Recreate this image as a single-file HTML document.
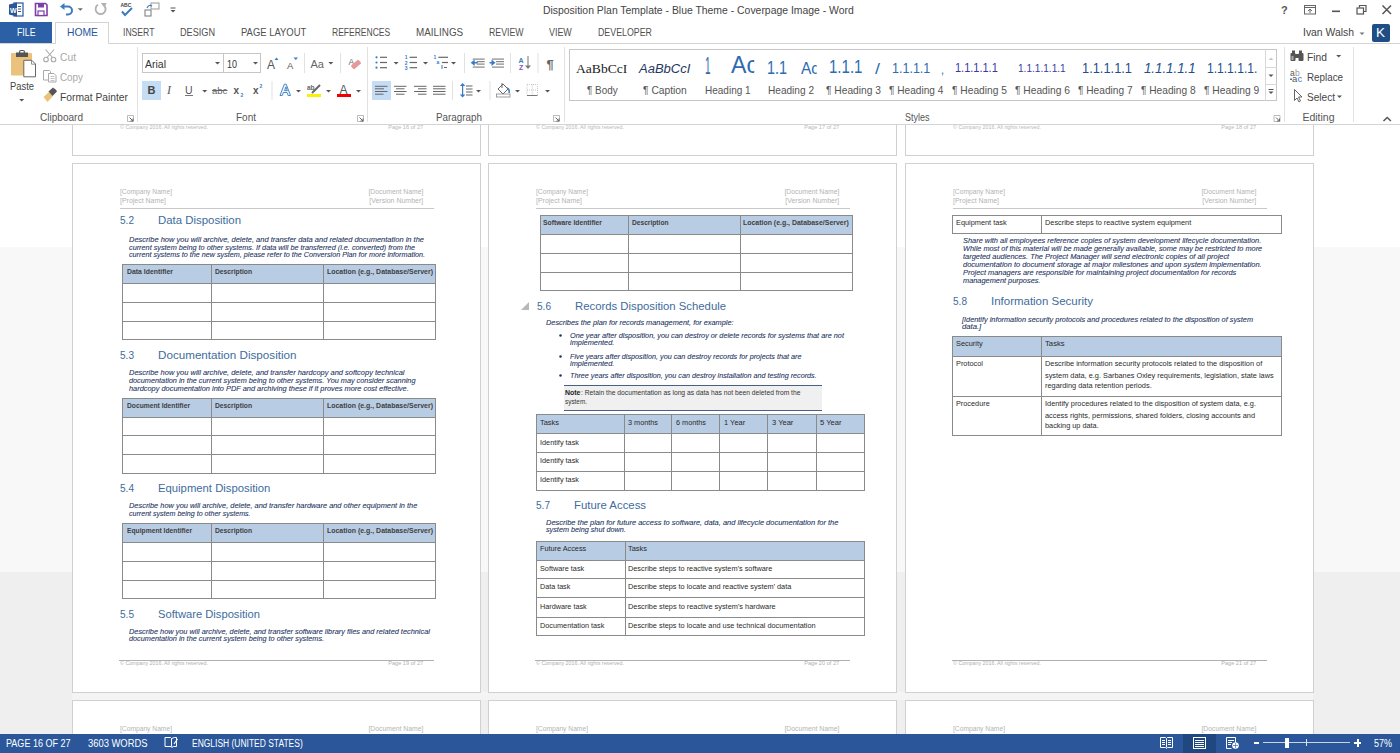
<!DOCTYPE html>
<html><head><meta charset="utf-8"><style>
html,body{margin:0;padding:0;width:1400px;height:753px;overflow:hidden;background:#fff;position:relative;font-family:'Liberation Sans',sans-serif;}
</style></head><body>
<div style="position:absolute;left:0px;top:125px;width:1400px;height:122px;background:#ffffff"></div>
<div style="position:absolute;left:0px;top:247px;width:1400px;height:325px;background:#f8f8f8"></div>
<div style="position:absolute;left:0px;top:572px;width:1400px;height:162px;background:#efefef"></div>
<div style="position:absolute;left:72px;top:692px;width:1241px;height:8px;background:#f4f4f4"></div>
<div style="position:absolute;left:72px;top:110px;width:409px;height:46px;background:#fff;border:1px solid #d0d0d0;border-top:none;box-sizing:border-box"></div>
<div style="position:absolute;left:72px;top:163px;width:409px;height:530px;background:#fff;border:1px solid #d0d0d0;box-sizing:border-box"></div>
<div style="position:absolute;left:72px;top:700px;width:409px;height:60px;background:#fff;border:1px solid #d0d0d0;box-sizing:border-box"></div>
<div style="position:absolute;left:488px;top:110px;width:409px;height:46px;background:#fff;border:1px solid #d0d0d0;border-top:none;box-sizing:border-box"></div>
<div style="position:absolute;left:488px;top:163px;width:409px;height:530px;background:#fff;border:1px solid #d0d0d0;box-sizing:border-box"></div>
<div style="position:absolute;left:488px;top:700px;width:409px;height:60px;background:#fff;border:1px solid #d0d0d0;box-sizing:border-box"></div>
<div style="position:absolute;left:905px;top:110px;width:409px;height:46px;background:#fff;border:1px solid #d0d0d0;border-top:none;box-sizing:border-box"></div>
<div style="position:absolute;left:905px;top:163px;width:409px;height:530px;background:#fff;border:1px solid #d0d0d0;box-sizing:border-box"></div>
<div style="position:absolute;left:905px;top:700px;width:409px;height:60px;background:#fff;border:1px solid #d0d0d0;box-sizing:border-box"></div>
<div style="position:absolute;left:120px;top:208px;width:314px;height:1px;background:#c8c8c8"></div>
<div style="position:absolute;left:119px;top:660px;width:315px;height:1px;background:#b0b0b0"></div>
<div style="position:absolute;left:536px;top:208px;width:314px;height:1px;background:#c8c8c8"></div>
<div style="position:absolute;left:535px;top:660px;width:315px;height:1px;background:#b0b0b0"></div>
<div style="position:absolute;left:953px;top:208px;width:314px;height:1px;background:#c8c8c8"></div>
<div style="position:absolute;left:952px;top:660px;width:315px;height:1px;background:#b0b0b0"></div>
<div style="position:absolute;left:122px;top:264px;width:313px;height:19px;background:#b8cce4"></div>
<div style="position:absolute;left:122px;top:264px;width:314px;height:1px;background:#8a8a8a"></div>
<div style="position:absolute;left:122px;top:283px;width:314px;height:1px;background:#8a8a8a"></div>
<div style="position:absolute;left:122px;top:302px;width:314px;height:1px;background:#8a8a8a"></div>
<div style="position:absolute;left:122px;top:321px;width:314px;height:1px;background:#8a8a8a"></div>
<div style="position:absolute;left:122px;top:339px;width:314px;height:1px;background:#8a8a8a"></div>
<div style="position:absolute;left:122px;top:264px;width:1px;height:76px;background:#8a8a8a"></div>
<div style="position:absolute;left:211px;top:264px;width:1px;height:76px;background:#8a8a8a"></div>
<div style="position:absolute;left:323px;top:264px;width:1px;height:76px;background:#8a8a8a"></div>
<div style="position:absolute;left:435px;top:264px;width:1px;height:76px;background:#8a8a8a"></div>
<div style="position:absolute;left:122px;top:398px;width:313px;height:19px;background:#b8cce4"></div>
<div style="position:absolute;left:122px;top:398px;width:314px;height:1px;background:#8a8a8a"></div>
<div style="position:absolute;left:122px;top:417px;width:314px;height:1px;background:#8a8a8a"></div>
<div style="position:absolute;left:122px;top:435px;width:314px;height:1px;background:#8a8a8a"></div>
<div style="position:absolute;left:122px;top:454px;width:314px;height:1px;background:#8a8a8a"></div>
<div style="position:absolute;left:122px;top:473px;width:314px;height:1px;background:#8a8a8a"></div>
<div style="position:absolute;left:122px;top:398px;width:1px;height:76px;background:#8a8a8a"></div>
<div style="position:absolute;left:211px;top:398px;width:1px;height:76px;background:#8a8a8a"></div>
<div style="position:absolute;left:323px;top:398px;width:1px;height:76px;background:#8a8a8a"></div>
<div style="position:absolute;left:435px;top:398px;width:1px;height:76px;background:#8a8a8a"></div>
<div style="position:absolute;left:122px;top:523px;width:313px;height:19px;background:#b8cce4"></div>
<div style="position:absolute;left:122px;top:523px;width:314px;height:1px;background:#8a8a8a"></div>
<div style="position:absolute;left:122px;top:542px;width:314px;height:1px;background:#8a8a8a"></div>
<div style="position:absolute;left:122px;top:561px;width:314px;height:1px;background:#8a8a8a"></div>
<div style="position:absolute;left:122px;top:580px;width:314px;height:1px;background:#8a8a8a"></div>
<div style="position:absolute;left:122px;top:598px;width:314px;height:1px;background:#8a8a8a"></div>
<div style="position:absolute;left:122px;top:523px;width:1px;height:76px;background:#8a8a8a"></div>
<div style="position:absolute;left:211px;top:523px;width:1px;height:76px;background:#8a8a8a"></div>
<div style="position:absolute;left:323px;top:523px;width:1px;height:76px;background:#8a8a8a"></div>
<div style="position:absolute;left:435px;top:523px;width:1px;height:76px;background:#8a8a8a"></div>
<div style="position:absolute;left:539.5px;top:214.5px;width:312.5px;height:19.5px;background:#b8cce4"></div>
<div style="position:absolute;left:539.5px;top:214.5px;width:313.5px;height:1px;background:#8a8a8a"></div>
<div style="position:absolute;left:539.5px;top:234px;width:313.5px;height:1px;background:#8a8a8a"></div>
<div style="position:absolute;left:539.5px;top:252.5px;width:313.5px;height:1px;background:#8a8a8a"></div>
<div style="position:absolute;left:539.5px;top:271.5px;width:313.5px;height:1px;background:#8a8a8a"></div>
<div style="position:absolute;left:539.5px;top:290px;width:313.5px;height:1px;background:#8a8a8a"></div>
<div style="position:absolute;left:539.5px;top:214.5px;width:1px;height:76.5px;background:#8a8a8a"></div>
<div style="position:absolute;left:627.5px;top:214.5px;width:1px;height:76.5px;background:#8a8a8a"></div>
<div style="position:absolute;left:739.5px;top:214.5px;width:1px;height:76.5px;background:#8a8a8a"></div>
<div style="position:absolute;left:852px;top:214.5px;width:1px;height:76.5px;background:#8a8a8a"></div>
<svg style="position:absolute;left:521px;top:302px" width="9" height="9"><polygon points="8,0 8,8 0,8" fill="#b8b8b8"/></svg>
<svg style="position:absolute;left:557.6px;top:332.5px" width="5" height="5"><circle cx="2.5" cy="2.5" r="1.25" fill="#1d3461"/></svg>
<svg style="position:absolute;left:557.6px;top:353.5px" width="5" height="5"><circle cx="2.5" cy="2.5" r="1.25" fill="#1d3461"/></svg>
<svg style="position:absolute;left:557.6px;top:372.5px" width="5" height="5"><circle cx="2.5" cy="2.5" r="1.25" fill="#1d3461"/></svg>
<div style="position:absolute;left:564px;top:386px;width:258px;height:24px;background:#f0f0f0"></div>
<div style="position:absolute;left:564px;top:385px;width:258px;height:1px;background:#4a5f85"></div>
<div style="position:absolute;left:564px;top:410px;width:258px;height:1px;background:#4a5f85"></div>
<div style="position:absolute;left:535.6px;top:414.2px;width:328.4px;height:19.19999999999999px;background:#b8cce4"></div>
<div style="position:absolute;left:535.6px;top:414.2px;width:329.4px;height:1px;background:#8a8a8a"></div>
<div style="position:absolute;left:535.6px;top:433.4px;width:329.4px;height:1px;background:#8a8a8a"></div>
<div style="position:absolute;left:535.6px;top:452.4px;width:329.4px;height:1px;background:#8a8a8a"></div>
<div style="position:absolute;left:535.6px;top:471px;width:329.4px;height:1px;background:#8a8a8a"></div>
<div style="position:absolute;left:535.6px;top:490px;width:329.4px;height:1px;background:#8a8a8a"></div>
<div style="position:absolute;left:535.6px;top:414.2px;width:1px;height:76.80000000000001px;background:#8a8a8a"></div>
<div style="position:absolute;left:624.2px;top:414.2px;width:1px;height:76.80000000000001px;background:#8a8a8a"></div>
<div style="position:absolute;left:671.3px;top:414.2px;width:1px;height:76.80000000000001px;background:#8a8a8a"></div>
<div style="position:absolute;left:719.4px;top:414.2px;width:1px;height:76.80000000000001px;background:#8a8a8a"></div>
<div style="position:absolute;left:767.2px;top:414.2px;width:1px;height:76.80000000000001px;background:#8a8a8a"></div>
<div style="position:absolute;left:815.8px;top:414.2px;width:1px;height:76.80000000000001px;background:#8a8a8a"></div>
<div style="position:absolute;left:864px;top:414.2px;width:1px;height:76.80000000000001px;background:#8a8a8a"></div>
<div style="position:absolute;left:535.5px;top:540.5px;width:328.9px;height:19.5px;background:#b8cce4"></div>
<div style="position:absolute;left:535.5px;top:540.5px;width:329.9px;height:1px;background:#8a8a8a"></div>
<div style="position:absolute;left:535.5px;top:560px;width:329.9px;height:1px;background:#8a8a8a"></div>
<div style="position:absolute;left:535.5px;top:578.3px;width:329.9px;height:1px;background:#8a8a8a"></div>
<div style="position:absolute;left:535.5px;top:597.3px;width:329.9px;height:1px;background:#8a8a8a"></div>
<div style="position:absolute;left:535.5px;top:616.7px;width:329.9px;height:1px;background:#8a8a8a"></div>
<div style="position:absolute;left:535.5px;top:635.4px;width:329.9px;height:1px;background:#8a8a8a"></div>
<div style="position:absolute;left:535.5px;top:540.5px;width:1px;height:95.89999999999998px;background:#8a8a8a"></div>
<div style="position:absolute;left:624.6px;top:540.5px;width:1px;height:95.89999999999998px;background:#8a8a8a"></div>
<div style="position:absolute;left:864.4px;top:540.5px;width:1px;height:95.89999999999998px;background:#8a8a8a"></div>
<div style="position:absolute;left:952px;top:214.5px;width:328.5px;height:18.75px;background:#b8cce4"></div>
<div style="position:absolute;left:952px;top:214.5px;width:329.5px;height:1px;background:#8a8a8a"></div>
<div style="position:absolute;left:952px;top:233.25px;width:329.5px;height:1px;background:#8a8a8a"></div>
<div style="position:absolute;left:952px;top:214.5px;width:1px;height:19.75px;background:#8a8a8a"></div>
<div style="position:absolute;left:1040.5px;top:214.5px;width:1px;height:19.75px;background:#8a8a8a"></div>
<div style="position:absolute;left:1280.5px;top:214.5px;width:1px;height:19.75px;background:#8a8a8a"></div>
<div style="position:absolute;left:952px;top:214.5px;width:328.5px;height:19px;background:#fff"></div>
<div style="position:absolute;left:952px;top:214.5px;width:329.5px;height:1px;background:#8a8a8a"></div>
<div style="position:absolute;left:952px;top:233.25px;width:329.5px;height:1px;background:#8a8a8a"></div>
<div style="position:absolute;left:952px;top:214.5px;width:1px;height:19.75px;background:#8a8a8a"></div>
<div style="position:absolute;left:1040.5px;top:214.5px;width:1px;height:19.75px;background:#8a8a8a"></div>
<div style="position:absolute;left:1280.5px;top:214.5px;width:1px;height:19.75px;background:#8a8a8a"></div>
<div style="position:absolute;left:952px;top:336.25px;width:328.5px;height:19.25px;background:#b8cce4"></div>
<div style="position:absolute;left:952px;top:336.25px;width:329.5px;height:1px;background:#8a8a8a"></div>
<div style="position:absolute;left:952px;top:355.5px;width:329.5px;height:1px;background:#8a8a8a"></div>
<div style="position:absolute;left:952px;top:396.25px;width:329.5px;height:1px;background:#8a8a8a"></div>
<div style="position:absolute;left:952px;top:435px;width:329.5px;height:1px;background:#8a8a8a"></div>
<div style="position:absolute;left:952px;top:336.25px;width:1px;height:99.75px;background:#8a8a8a"></div>
<div style="position:absolute;left:1040.5px;top:336.25px;width:1px;height:99.75px;background:#8a8a8a"></div>
<div style="position:absolute;left:1280.5px;top:336.25px;width:1px;height:99.75px;background:#8a8a8a"></div>
<div style="position:absolute;left:0px;top:0px;width:1400px;height:125px;background:#fff"></div>
<div style="position:absolute;left:0px;top:124px;width:1400px;height:1px;background:#d4d4d4"></div>
<div style="position:absolute;left:0px;top:22px;width:52px;height:21px;background:#2b5fa6"></div>
<div style="position:absolute;left:0px;top:43px;width:55px;height:1px;background:#d4d4d4"></div>
<div style="position:absolute;left:109px;top:43px;width:1291px;height:1px;background:#d4d4d4"></div>
<div style="position:absolute;left:55px;top:22px;width:1px;height:22px;background:#d4d4d4"></div>
<div style="position:absolute;left:108px;top:22px;width:1px;height:22px;background:#d4d4d4"></div>
<div style="position:absolute;left:55px;top:22px;width:54px;height:1px;background:#d4d4d4"></div>
<div style="position:absolute;left:1371.5px;top:23.5px;width:18.5px;height:18.5px;background:#1f4e86;border-radius:2px"></div>
<div style="position:absolute;left:137px;top:47px;width:1px;height:75px;background:#e1e1e1"></div>
<div style="position:absolute;left:367px;top:47px;width:1px;height:75px;background:#e1e1e1"></div>
<div style="position:absolute;left:564px;top:47px;width:1px;height:75px;background:#e1e1e1"></div>
<div style="position:absolute;left:1284px;top:47px;width:1px;height:75px;background:#e1e1e1"></div>
<div style="position:absolute;left:1353px;top:47px;width:1px;height:75px;background:#e1e1e1"></div>
<div style="position:absolute;left:142px;top:53px;width:82px;height:20px;border:1px solid #c6c6c6;box-sizing:border-box;background:#fff"></div>
<div style="position:absolute;left:223px;top:53px;width:38px;height:20px;border:1px solid #c6c6c6;box-sizing:border-box;background:#fff"></div>
<div style="position:absolute;left:142px;top:81px;width:19px;height:19px;background:#c5dcf5"></div>
<div style="position:absolute;left:372px;top:81px;width:19px;height:19px;background:#c5dcf5"></div>
<div style="position:absolute;left:569px;top:49px;width:708px;height:52px;border:1px solid #c6c6c6;box-sizing:border-box;background:#fff"></div>
<div style="position:absolute;left:1265px;top:49px;width:1px;height:52px;background:#d8d8d8"></div>
<div style="position:absolute;left:1265px;top:67px;width:12px;height:1px;background:#d8d8d8"></div>
<div style="position:absolute;left:1265px;top:84px;width:12px;height:1px;background:#d8d8d8"></div>
<svg style="position:absolute;left:0;top:0" width="1400" height="125"><rect x="14" y="3" width="9" height="13" fill="#fff" stroke="#2b579a" stroke-width="1.2"/><polygon points="9,4.5 17,2.5 17,16.5 9,14.5" fill="#2b579a"/><text x="10" y="13" font-family="Liberation Sans" font-weight="bold" font-size="7" fill="#fff">W</text><path d="M18 6.5h3M18 9h3M18 11.5h3" stroke="#2b579a" stroke-width="1"/><path d="M35.5 3.5h10l1.5 1.5v10.5h-11.5z" fill="none" stroke="#7e3fa6" stroke-width="1.6"/><rect x="38" y="3.5" width="6" height="4" fill="#7e3fa6"/><rect x="38" y="11" width="6" height="4.5" fill="#fff" stroke="#7e3fa6" stroke-width="1.2"/><path d="M62 6.5h6a4 4 0 0 1 0 8h-2" fill="none" stroke="#3a7cc2" stroke-width="2"/><polygon points="60,6.5 64.5,3 64.5,10" fill="#3a7cc2"/><polygon points="77.8,8.2 82.8,8.2 80.3,10.7" fill="#666"/><path d="M104.5 6 A5 5 0 1 1 98 4.8" fill="none" stroke="#b0b0b0" stroke-width="1.8"/><polygon points="101,3 106.5,3 104.5,8" fill="#b0b0b0"/><text x="120.5" y="7" font-family="Liberation Sans" font-weight="bold" font-size="5" fill="#444">ABC</text><path d="M122 11.5l3 3.5l7-7" fill="none" stroke="#3a7cc2" stroke-width="2"/><rect x="145" y="10" width="6" height="6" fill="#fff" stroke="#777" stroke-width="1"/><rect x="151" y="3" width="8" height="6" fill="#fff" stroke="#999" stroke-width="1"/><path d="M147 8 q2 -4 5 -2" fill="none" stroke="#3a7cc2" stroke-width="1.2"/><path d="M170.5 8h5" stroke="#555" stroke-width="1"/><polygon points="170.5,10 175.5,10 173.0,12.5" fill="#555"/><text x="1281" y="14" font-family="Liberation Sans" font-weight="bold" font-size="11" fill="#555">?</text><rect x="1304.5" y="5.5" width="11" height="8.5" fill="none" stroke="#666" stroke-width="1"/><path d="M1304.5 7.5h11M1310 13v-4M1308 11l2-2l2 2" fill="none" stroke="#666" stroke-width="1"/><rect x="1332" y="10.5" width="8" height="1.6" fill="#555"/><rect x="1357" y="8" width="6.5" height="6" fill="none" stroke="#555" stroke-width="1.2"/><path d="M1359.5 7.5v-2h6.5v6h-2" fill="none" stroke="#555" stroke-width="1.2"/><path d="M1382.5 5.5l8.5 8.5M1391 5.5l-8.5 8.5" stroke="#555" stroke-width="1.5"/><polygon points="1359.5,32.5 1364.5,32.5 1362.0,35.0" fill="#777"/><rect x="11" y="53" width="21" height="22.5" rx="1" fill="#eac27b"/><rect x="16" y="52.5" width="12" height="4.5" fill="#555"/><rect x="19.5" y="50.5" width="5" height="3" rx="1.5" fill="none" stroke="#555" stroke-width="1.2"/><path d="M23.8 60.3h8l3.7 3.7v12.8h-11.7z" fill="#fff" stroke="#666" stroke-width="1"/><path d="M31.5 60.3v3.9h4" fill="none" stroke="#777" stroke-width="0.8"/><polygon points="19.2,99 24.2,99 21.7,101.5" fill="#555"/><circle cx="46" cy="59.5" r="2.3" fill="none" stroke="#aaa" stroke-width="1.1"/><circle cx="53.5" cy="59.5" r="2.3" fill="none" stroke="#aaa" stroke-width="1.1"/><path d="M47 57.5l7-8M52.5 57.5l-7-8" stroke="#aaa" stroke-width="1.1"/><path d="M43.5 70.5h6l1 1v8.5h-7z" fill="#fff" stroke="#aaa" stroke-width="1"/><path d="M48.5 73.5h5.5l2 2v6.5h-7.5z" fill="#fff" stroke="#aaa" stroke-width="1"/><path d="M50.5 76.5h4M50.5 78.5h4M50.5 80.5h4" stroke="#aaa" stroke-width="0.7"/><polygon points="43.5,97 49,92 53,96 47.5,102" fill="#eac27b"/><polygon points="48.5,91.5 53,87.5 57,91.5 52.5,96" fill="#555"/><rect x="53" y="89" width="3" height="3" fill="#555" transform="rotate(45 54.5 90.5)"/><polygon points="215,62 220,62 217.5,64.5" fill="#555"/><polygon points="253,62 258,62 255.5,64.5" fill="#555"/><text x="267" y="68.5" font-family="Liberation Sans" font-size="12" fill="#555">A</text><polygon points="274.5,60 278.5,60 276.5,57.5" fill="#3a7cc2"/><text x="287" y="68.5" font-family="Liberation Sans" font-size="9.5" fill="#555">A</text><polygon points="293.5,57.5 298,57.5 295.8,60" fill="#3a7cc2"/><rect x="304" y="53" width="1" height="20" fill="#e1e1e1"/><text x="310.5" y="67.5" font-family="Liberation Sans" font-size="11" fill="#666">Aa</text><polygon points="328.3,62 333.3,62 330.8,64.5" fill="#555"/><rect x="340" y="53" width="1" height="20" fill="#e1e1e1"/><text x="348.5" y="64.5" font-family="Liberation Sans" font-size="8.5" fill="#666">A</text><rect x="351" y="62" width="10" height="5" rx="1" fill="#e49a9a" transform="rotate(-40 356 64.5)"/><text x="147.5" y="94" font-family="Liberation Sans" font-weight="bold" font-size="11" fill="#444">B</text><text x="167" y="94" font-family="Liberation Serif" font-style="italic" font-size="12" fill="#555">I</text><text x="185" y="93.5" font-family="Liberation Sans" font-size="10.5" fill="#555">U</text><rect x="185" y="95" width="8" height="1" fill="#777"/><polygon points="202.2,90 207.2,90 204.7,92.5" fill="#555"/><text x="212" y="94" font-family="Liberation Sans" font-size="9.5" fill="#666">abc</text><rect x="212" y="90" width="15.5" height="1" fill="#666"/><text x="233.5" y="94" font-family="Liberation Sans" font-weight="bold" font-size="10" fill="#555">x</text><text x="240.5" y="96.5" font-family="Liberation Sans" font-weight="bold" font-size="5" fill="#3a7cc2">2</text><text x="253" y="94" font-family="Liberation Sans" font-weight="bold" font-size="10" fill="#555">x</text><text x="259.5" y="88" font-family="Liberation Sans" font-weight="bold" font-size="5" fill="#3a7cc2">2</text><rect x="271.5" y="81" width="1" height="19" fill="#e1e1e1"/><path d="M280 95.5L284.3 84.2h1.9L290.5 95.5h-2.4l-1.1-3h-3.6l-1.1 3z M284.6 90.6h2.7l-1.35-3.8z" fill="#eef4fb" fill-rule="evenodd" stroke="#3a7cc2" stroke-width="0.9" stroke-linejoin="round"/><polygon points="296,90 301,90 298.5,92.5" fill="#555"/><text x="307" y="90" font-family="Liberation Sans" font-weight="bold" font-size="6.5" fill="#666">ab</text><path d="M312 93l8-8" stroke="#666" stroke-width="2"/><rect x="307" y="94" width="14" height="3" fill="#f7f200"/><polygon points="326,90 331,90 328.5,92.5" fill="#555"/><text x="339.5" y="93.5" font-family="Liberation Sans" font-size="12" fill="#555">A</text><rect x="337" y="94" width="14" height="3" fill="#f00000"/><polygon points="356,90 361,90 358.5,92.5" fill="#555"/><circle cx="376.5" cy="57.3" r="1.1" fill="#3a7cc2"/><rect x="380" y="56.699999999999996" width="7" height="1.2" fill="#666"/><text x="404.8" y="59.3" font-family="Liberation Sans" font-weight="bold" font-size="5" fill="#3a7cc2">1</text><rect x="409.6" y="56.699999999999996" width="7.4" height="1.2" fill="#666"/><circle cx="376.5" cy="62.5" r="1.1" fill="#3a7cc2"/><rect x="380" y="61.9" width="7" height="1.2" fill="#666"/><text x="404.8" y="64.5" font-family="Liberation Sans" font-weight="bold" font-size="5" fill="#3a7cc2">2</text><rect x="409.6" y="61.9" width="7.4" height="1.2" fill="#666"/><circle cx="376.5" cy="67.7" r="1.1" fill="#3a7cc2"/><rect x="380" y="67.10000000000001" width="7" height="1.2" fill="#666"/><text x="404.8" y="69.7" font-family="Liberation Sans" font-weight="bold" font-size="5" fill="#3a7cc2">3</text><rect x="409.6" y="67.10000000000001" width="7.4" height="1.2" fill="#666"/><polygon points="393.6,62 398.6,62 396.1,64.5" fill="#555"/><polygon points="423,62 428,62 425.5,64.5" fill="#555"/><text x="433.5" y="59" font-family="Liberation Sans" font-weight="bold" font-size="5" fill="#3a7cc2">1</text><rect x="438.3" y="56.7" width="9.7" height="1.2" fill="#666"/><text x="436.5" y="64" font-family="Liberation Sans" font-weight="bold" font-size="5" fill="#3a7cc2">a</text><rect x="442" y="61.9" width="6" height="1.2" fill="#666"/><rect x="441.5" y="65" width="1" height="4" fill="#3a7cc2"/><rect x="444" y="67" width="3" height="1" fill="#666"/><polygon points="451,62 456,62 453.5,64.5" fill="#555"/><rect x="464" y="53" width="1" height="20" fill="#e1e1e1"/><rect x="472.7" y="58.5" width="12" height="1.2" fill="#888"/><rect x="476.7" y="61" width="8" height="1.2" fill="#888"/><rect x="476.7" y="63.5" width="8" height="1.2" fill="#888"/><rect x="472.7" y="66.5" width="12" height="1.2" fill="#888"/><polygon points="470.7,62.7 474.7,59.5 474.7,66" fill="#3a7cc2"/><rect x="473.7" y="62" width="4" height="1.5" fill="#3a7cc2"/><rect x="492" y="58.5" width="12" height="1.2" fill="#888"/><rect x="496" y="61" width="8" height="1.2" fill="#888"/><rect x="496" y="63.5" width="8" height="1.2" fill="#888"/><rect x="492" y="66.5" width="12" height="1.2" fill="#888"/><polygon points="495.5,62.7 491.5,59.5 491.5,66" fill="#3a7cc2"/><rect x="489.5" y="62" width="3" height="1.5" fill="#3a7cc2"/><rect x="510" y="53" width="1" height="20" fill="#e1e1e1"/><text x="518.5" y="62.5" font-family="Liberation Sans" font-weight="bold" font-size="7" fill="#3a7cc2">A</text><text x="519" y="69.5" font-family="Liberation Sans" font-weight="bold" font-size="7" fill="#8a4fb8">Z</text><rect x="527.5" y="56" width="1" height="12" fill="#777"/><polygon points="525,65.5 531,65.5 528,69" fill="#777"/><rect x="537.5" y="53" width="1" height="20" fill="#e1e1e1"/><text x="546.5" y="68.5" font-family="Liberation Sans" font-weight="bold" font-size="13" fill="#666">¶</text><rect x="375" y="85.8" width="12.5" height="1" fill="#666"/><rect x="375" y="88.3" width="9" height="1" fill="#666"/><rect x="375" y="91" width="12.5" height="1" fill="#666"/><rect x="375" y="93.7" width="8.5" height="1" fill="#666"/><rect x="394" y="85.8" width="12.5" height="1" fill="#666"/><rect x="396" y="88.3" width="8.5" height="1" fill="#666"/><rect x="394" y="91" width="12.5" height="1" fill="#666"/><rect x="396" y="93.7" width="8.5" height="1" fill="#666"/><rect x="414" y="85.8" width="12.5" height="1" fill="#666"/><rect x="418" y="88.3" width="8.5" height="1" fill="#666"/><rect x="414" y="91" width="12.5" height="1" fill="#666"/><rect x="418" y="93.7" width="8.5" height="1" fill="#666"/><rect x="433" y="85.8" width="12.5" height="1" fill="#666"/><rect x="433" y="88.3" width="12.5" height="1" fill="#666"/><rect x="433" y="91" width="12.5" height="1" fill="#666"/><rect x="433" y="93.7" width="12.5" height="1" fill="#666"/><rect x="452" y="81" width="1" height="19" fill="#e1e1e1"/><rect x="462" y="85" width="1.2" height="10" fill="#3a7cc2"/><polygon points="459.8,86 465.4,86 462.6,83" fill="#3a7cc2"/><polygon points="459.8,94.5 465.4,94.5 462.6,97.5" fill="#3a7cc2"/><rect x="466" y="85.5" width="6.5" height="1" fill="#666"/><rect x="466" y="88.5" width="6.5" height="1" fill="#666"/><rect x="466" y="91.5" width="6.5" height="1" fill="#666"/><rect x="466" y="94.5" width="6.5" height="1" fill="#666"/><polygon points="476,90 481,90 478.5,92.5" fill="#555"/><rect x="489.5" y="81" width="1" height="19" fill="#e1e1e1"/><polygon points="498,89 503,84 508,89 503,94" fill="#fff" stroke="#666" stroke-width="1"/><path d="M502 83v5" stroke="#666" stroke-width="1"/><path d="M507 88q3 1 2 5" stroke="#3a7cc2" stroke-width="1.5" fill="none"/><rect x="496.5" y="94" width="13.5" height="3" fill="#fff" stroke="#888" stroke-width="0.8"/><polygon points="515,90 520,90 517.5,92.5" fill="#555"/><rect x="527" y="84.5" width="10.5" height="11" fill="none" stroke="#bbb" stroke-width="0.8" stroke-dasharray="1,1"/><path d="M532.2 84.5v11M527 90h10.5" stroke="#bbb" stroke-width="0.8" stroke-dasharray="1,1"/><rect x="527" y="95" width="10.5" height="1" fill="#777"/><polygon points="545,90 550,90 547.5,92.5" fill="#555"/><path d="M127.5 115.5h6v6h-6z" fill="none" stroke="#aaa" stroke-width="0.8"/><path d="M129.5 117.5l3.5 3.5M133 118.5v2.5h-2.5" stroke="#666" stroke-width="1" fill="none"/><path d="M357.5 115.5h6v6h-6z" fill="none" stroke="#aaa" stroke-width="0.8"/><path d="M359.5 117.5l3.5 3.5M363 118.5v2.5h-2.5" stroke="#666" stroke-width="1" fill="none"/><path d="M553.5 115.5h6v6h-6z" fill="none" stroke="#aaa" stroke-width="0.8"/><path d="M555.5 117.5l3.5 3.5M559 118.5v2.5h-2.5" stroke="#666" stroke-width="1" fill="none"/><path d="M1274.0 115.5h6v6h-6z" fill="none" stroke="#aaa" stroke-width="0.8"/><path d="M1276.0 117.5l3.5 3.5M1279.5 118.5v2.5h-2.5" stroke="#666" stroke-width="1" fill="none"/><polygon points="1268.5,60 1273.5,60 1271,57.5" fill="#c8c8c8"/><polygon points="1268.5,74.5 1273.5,74.5 1271,77" fill="#555"/><rect x="1268.5" y="89" width="5" height="1" fill="#555"/><polygon points="1268.5,91.5 1273.5,91.5 1271,94" fill="#555"/><rect x="1290.5" y="53" width="5" height="8" rx="1" fill="#555"/><rect x="1298.5" y="53" width="5" height="8" rx="1" fill="#555"/><rect x="1292" y="50.5" width="3" height="3" fill="#555"/><rect x="1299" y="50.5" width="3" height="3" fill="#555"/><rect x="1295" y="54" width="4" height="4" fill="#555"/><rect x="1291.5" y="56" width="2" height="4" fill="#aaa"/><polygon points="1336.2,55 1341.2,55 1338.7,57.5" fill="#555"/><text x="1290" y="75.8" font-family="Liberation Sans" font-size="8.5" fill="#555">a</text><text x="1295" y="75.8" font-family="Liberation Sans" font-size="8.5" fill="#999">b</text><text x="1292" y="82.3" font-family="Liberation Sans" font-size="9.5" fill="#555">a</text><text x="1297.5" y="82.3" font-family="Liberation Sans" font-size="9.5" fill="#3a7cc2">c</text><rect x="1290" y="78.5" width="2" height="1.5" fill="#3a7cc2"/><path d="M1294.5 89.5v11l2.5-2.5l2 4l1.5-1l-2-4h3.5z" fill="#fff" stroke="#555" stroke-width="0.9"/><polygon points="1337,95.5 1342,95.5 1339.5,98.0" fill="#555"/><path d="M1383.5 121l3.7-3.5l3.7 3.5" fill="none" stroke="#555" stroke-width="1.5"/></svg>
<div style="position:absolute;left:0px;top:734px;width:1400px;height:19px;background:#2b579a"></div>
<div style="position:absolute;left:1183px;top:734px;width:33px;height:19px;background:#1f4780"></div>
<div style="position:absolute;left:1254px;top:742px;width:5px;height:1.5px;background:#fff"></div>
<div style="position:absolute;left:1263px;top:742px;width:87px;height:1px;background:#c8d3e6"></div>
<div style="position:absolute;left:1285px;top:738px;width:4px;height:10px;background:#fff"></div>
<div style="position:absolute;left:1306px;top:739px;width:1px;height:7px;background:#dfe6f0"></div>
<div style="position:absolute;left:1354px;top:742px;width:7px;height:1.5px;background:#fff"></div>
<div style="position:absolute;left:1357px;top:739px;width:1.5px;height:8px;background:#fff"></div>
<svg style="position:absolute;left:0;top:0" width="1400" height="753"><path d="M165 737.5h5.5l1 1v8h-6.5z" fill="none" stroke="#fff" stroke-width="1"/><path d="M171.5 738.5l3-1h2v9h-3l-2 1" fill="none" stroke="#fff" stroke-width="1"/><path d="M174 744l3.5-5" stroke="#fff" stroke-width="1.2"/><path d="M1160.5 737.5h5l1 1l1-1h5v10h-5l-1 1l-1-1h-5z" fill="none" stroke="#fff" stroke-width="1"/><path d="M1166.5 738.5v9M1162 740.5h3M1162 742.5h3M1162 744.5h3M1168 740.5h3M1168 742.5h3M1168 744.5h3" stroke="#fff" stroke-width="1"/><rect x="1193.5" y="737.5" width="12" height="11" fill="none" stroke="#fff" stroke-width="1"/><path d="M1195 740.5h9M1195 742.5h9M1195 744.5h9M1195 746.5h9" stroke="#fff" stroke-width="1"/><path d="M1226.5 737.5h9v5M1226.5 737.5v11h5" fill="none" stroke="#fff" stroke-width="1"/><path d="M1228 740.5h6M1228 742.5h4M1228 744.5h3" stroke="#fff" stroke-width="1"/><circle cx="1235.5" cy="745.5" r="3.3" fill="#fff"/><path d="M1233 745.5h5M1235.5 743v5" stroke="#2b579a" stroke-width="0.6"/></svg>
<div style="position:absolute;top:189.10px;font-family:'Liberation Sans',sans-serif;font-size:6.5px;line-height:6.5px;color:#b4b4b4;font-weight:normal;font-style:normal;white-space:pre;left:120.00px;transform-origin:left center;transform:scaleX(1.0281);">[Company Name]</div>
<div style="position:absolute;top:198.10px;font-family:'Liberation Sans',sans-serif;font-size:6.5px;line-height:6.5px;color:#b4b4b4;font-weight:normal;font-style:normal;white-space:pre;left:120.00px;transform-origin:left center;transform:scaleX(1.0698);">[Project Name]</div>
<div style="position:absolute;top:189.10px;font-family:'Liberation Sans',sans-serif;font-size:6.5px;line-height:6.5px;color:#b4b4b4;font-weight:normal;font-style:normal;white-space:pre;right:976.50px;transform-origin:right center;transform:scaleX(1.0498);">[Document Name]</div>
<div style="position:absolute;top:198.10px;font-family:'Liberation Sans',sans-serif;font-size:6.5px;line-height:6.5px;color:#b4b4b4;font-weight:normal;font-style:normal;white-space:pre;right:976.50px;transform-origin:right center;transform:scaleX(1.0753);">[Version Number]</div>
<div style="position:absolute;top:661.27px;font-family:'Liberation Sans',sans-serif;font-size:5px;line-height:5px;color:#b0b0b0;font-weight:normal;font-style:normal;white-space:pre;left:120.00px;transform-origin:left center;transform:scaleX(1.0616);">© Company 2016. All rights reserved.</div>
<div style="position:absolute;top:661.27px;font-family:'Liberation Sans',sans-serif;font-size:5px;line-height:5px;color:#b0b0b0;font-weight:normal;font-style:normal;white-space:pre;right:977.00px;transform-origin:right center;transform:scaleX(1.1239);">Page 19 of 27</div>
<div style="position:absolute;top:124.77px;font-family:'Liberation Sans',sans-serif;font-size:5px;line-height:5px;color:#b8b8b8;font-weight:normal;font-style:normal;white-space:pre;left:120.00px;transform-origin:left center;transform:scaleX(1.0616);">© Company 2016. All rights reserved.</div>
<div style="position:absolute;top:124.77px;font-family:'Liberation Sans',sans-serif;font-size:5px;line-height:5px;color:#b8b8b8;font-weight:normal;font-style:normal;white-space:pre;right:977.00px;transform-origin:right center;transform:scaleX(1.1239);">Page 16 of 27</div>
<div style="position:absolute;top:725.50px;font-family:'Liberation Sans',sans-serif;font-size:6.5px;line-height:6.5px;color:#b4b4b4;font-weight:normal;font-style:normal;white-space:pre;left:120.00px;transform-origin:left center;transform:scaleX(1.0281);">[Company Name]</div>
<div style="position:absolute;top:725.50px;font-family:'Liberation Sans',sans-serif;font-size:6.5px;line-height:6.5px;color:#b4b4b4;font-weight:normal;font-style:normal;white-space:pre;right:976.50px;transform-origin:right center;transform:scaleX(1.0498);">[Document Name]</div>
<div style="position:absolute;top:189.10px;font-family:'Liberation Sans',sans-serif;font-size:6.5px;line-height:6.5px;color:#b4b4b4;font-weight:normal;font-style:normal;white-space:pre;left:536.00px;transform-origin:left center;transform:scaleX(1.0281);">[Company Name]</div>
<div style="position:absolute;top:198.10px;font-family:'Liberation Sans',sans-serif;font-size:6.5px;line-height:6.5px;color:#b4b4b4;font-weight:normal;font-style:normal;white-space:pre;left:536.00px;transform-origin:left center;transform:scaleX(1.0698);">[Project Name]</div>
<div style="position:absolute;top:189.10px;font-family:'Liberation Sans',sans-serif;font-size:6.5px;line-height:6.5px;color:#b4b4b4;font-weight:normal;font-style:normal;white-space:pre;right:560.50px;transform-origin:right center;transform:scaleX(1.0498);">[Document Name]</div>
<div style="position:absolute;top:198.10px;font-family:'Liberation Sans',sans-serif;font-size:6.5px;line-height:6.5px;color:#b4b4b4;font-weight:normal;font-style:normal;white-space:pre;right:560.50px;transform-origin:right center;transform:scaleX(1.0753);">[Version Number]</div>
<div style="position:absolute;top:661.27px;font-family:'Liberation Sans',sans-serif;font-size:5px;line-height:5px;color:#b0b0b0;font-weight:normal;font-style:normal;white-space:pre;left:536.00px;transform-origin:left center;transform:scaleX(1.0616);">© Company 2016. All rights reserved.</div>
<div style="position:absolute;top:661.27px;font-family:'Liberation Sans',sans-serif;font-size:5px;line-height:5px;color:#b0b0b0;font-weight:normal;font-style:normal;white-space:pre;right:561.00px;transform-origin:right center;transform:scaleX(1.1239);">Page 20 of 27</div>
<div style="position:absolute;top:124.77px;font-family:'Liberation Sans',sans-serif;font-size:5px;line-height:5px;color:#b8b8b8;font-weight:normal;font-style:normal;white-space:pre;left:536.00px;transform-origin:left center;transform:scaleX(1.0616);">© Company 2016. All rights reserved.</div>
<div style="position:absolute;top:124.77px;font-family:'Liberation Sans',sans-serif;font-size:5px;line-height:5px;color:#b8b8b8;font-weight:normal;font-style:normal;white-space:pre;right:561.00px;transform-origin:right center;transform:scaleX(1.1239);">Page 17 of 27</div>
<div style="position:absolute;top:725.50px;font-family:'Liberation Sans',sans-serif;font-size:6.5px;line-height:6.5px;color:#b4b4b4;font-weight:normal;font-style:normal;white-space:pre;left:536.00px;transform-origin:left center;transform:scaleX(1.0281);">[Company Name]</div>
<div style="position:absolute;top:725.50px;font-family:'Liberation Sans',sans-serif;font-size:6.5px;line-height:6.5px;color:#b4b4b4;font-weight:normal;font-style:normal;white-space:pre;right:560.50px;transform-origin:right center;transform:scaleX(1.0498);">[Document Name]</div>
<div style="position:absolute;top:189.10px;font-family:'Liberation Sans',sans-serif;font-size:6.5px;line-height:6.5px;color:#b4b4b4;font-weight:normal;font-style:normal;white-space:pre;left:953.00px;transform-origin:left center;transform:scaleX(1.0281);">[Company Name]</div>
<div style="position:absolute;top:198.10px;font-family:'Liberation Sans',sans-serif;font-size:6.5px;line-height:6.5px;color:#b4b4b4;font-weight:normal;font-style:normal;white-space:pre;left:953.00px;transform-origin:left center;transform:scaleX(1.0698);">[Project Name]</div>
<div style="position:absolute;top:189.10px;font-family:'Liberation Sans',sans-serif;font-size:6.5px;line-height:6.5px;color:#b4b4b4;font-weight:normal;font-style:normal;white-space:pre;right:143.50px;transform-origin:right center;transform:scaleX(1.0498);">[Document Name]</div>
<div style="position:absolute;top:198.10px;font-family:'Liberation Sans',sans-serif;font-size:6.5px;line-height:6.5px;color:#b4b4b4;font-weight:normal;font-style:normal;white-space:pre;right:143.50px;transform-origin:right center;transform:scaleX(1.0753);">[Version Number]</div>
<div style="position:absolute;top:661.27px;font-family:'Liberation Sans',sans-serif;font-size:5px;line-height:5px;color:#b0b0b0;font-weight:normal;font-style:normal;white-space:pre;left:953.00px;transform-origin:left center;transform:scaleX(1.0616);">© Company 2016. All rights reserved.</div>
<div style="position:absolute;top:661.27px;font-family:'Liberation Sans',sans-serif;font-size:5px;line-height:5px;color:#b0b0b0;font-weight:normal;font-style:normal;white-space:pre;right:144.00px;transform-origin:right center;transform:scaleX(1.1239);">Page 21 of 27</div>
<div style="position:absolute;top:124.77px;font-family:'Liberation Sans',sans-serif;font-size:5px;line-height:5px;color:#b8b8b8;font-weight:normal;font-style:normal;white-space:pre;left:953.00px;transform-origin:left center;transform:scaleX(1.0616);">© Company 2016. All rights reserved.</div>
<div style="position:absolute;top:124.77px;font-family:'Liberation Sans',sans-serif;font-size:5px;line-height:5px;color:#b8b8b8;font-weight:normal;font-style:normal;white-space:pre;right:144.00px;transform-origin:right center;transform:scaleX(1.1239);">Page 18 of 27</div>
<div style="position:absolute;top:725.50px;font-family:'Liberation Sans',sans-serif;font-size:6.5px;line-height:6.5px;color:#b4b4b4;font-weight:normal;font-style:normal;white-space:pre;left:953.00px;transform-origin:left center;transform:scaleX(1.0281);">[Company Name]</div>
<div style="position:absolute;top:725.50px;font-family:'Liberation Sans',sans-serif;font-size:6.5px;line-height:6.5px;color:#b4b4b4;font-weight:normal;font-style:normal;white-space:pre;right:143.50px;transform-origin:right center;transform:scaleX(1.0498);">[Document Name]</div>
<div style="position:absolute;top:214.91px;font-family:'Liberation Sans',sans-serif;font-size:10.5px;line-height:10.5px;color:#406c9c;font-weight:normal;font-style:normal;white-space:pre;left:120.00px;transform-origin:left center;transform:scaleX(0.9583);">5.2</div>
<div style="position:absolute;top:214.91px;font-family:'Liberation Sans',sans-serif;font-size:10.5px;line-height:10.5px;color:#406c9c;font-weight:normal;font-style:normal;white-space:pre;left:158.00px;transform-origin:left center;transform:scaleX(1.0856);">Data Disposition</div>
<div style="position:absolute;top:237.11px;font-family:'Liberation Sans',sans-serif;font-size:6.6px;line-height:6.6px;color:#1d3461;font-weight:normal;font-style:italic;white-space:pre;-webkit-text-stroke:0.08px #1d3461;left:129.00px;transform-origin:left center;transform:scaleX(1.1367);">Describe how you will archive, delete, and transfer data and related documentation in the</div>
<div style="position:absolute;top:244.71px;font-family:'Liberation Sans',sans-serif;font-size:6.6px;line-height:6.6px;color:#1d3461;font-weight:normal;font-style:italic;white-space:pre;-webkit-text-stroke:0.08px #1d3461;left:129.00px;transform-origin:left center;transform:scaleX(1.1038);">current system being to other systems. If data will be transferred (i.e. converted) from the</div>
<div style="position:absolute;top:252.31px;font-family:'Liberation Sans',sans-serif;font-size:6.6px;line-height:6.6px;color:#1d3461;font-weight:normal;font-style:italic;white-space:pre;-webkit-text-stroke:0.08px #1d3461;left:129.00px;transform-origin:left center;transform:scaleX(1.0914);">current systems to the new system, please refer to the Conversion Plan for more information.</div>
<div style="position:absolute;top:269.37px;font-family:'Liberation Sans',sans-serif;font-size:6.3px;line-height:6.3px;color:#404040;font-weight:bold;font-style:normal;white-space:pre;left:127.00px;transform-origin:left center;transform:scaleX(1.0952);">Data Identifier</div>
<div style="position:absolute;top:269.37px;font-family:'Liberation Sans',sans-serif;font-size:6.3px;line-height:6.3px;color:#404040;font-weight:bold;font-style:normal;white-space:pre;left:215.00px;transform-origin:left center;transform:scaleX(1.0681);">Description</div>
<div style="position:absolute;top:269.37px;font-family:'Liberation Sans',sans-serif;font-size:6.3px;line-height:6.3px;color:#404040;font-weight:bold;font-style:normal;white-space:pre;left:327.00px;transform-origin:left center;transform:scaleX(1.1054);">Location (e.g., Database/Server)</div>
<div style="position:absolute;top:349.81px;font-family:'Liberation Sans',sans-serif;font-size:10.5px;line-height:10.5px;color:#406c9c;font-weight:normal;font-style:normal;white-space:pre;left:120.00px;transform-origin:left center;transform:scaleX(0.9583);">5.3</div>
<div style="position:absolute;top:349.81px;font-family:'Liberation Sans',sans-serif;font-size:10.5px;line-height:10.5px;color:#406c9c;font-weight:normal;font-style:normal;white-space:pre;left:158.00px;transform-origin:left center;transform:scaleX(1.1088);">Documentation Disposition</div>
<div style="position:absolute;top:369.91px;font-family:'Liberation Sans',sans-serif;font-size:6.6px;line-height:6.6px;color:#1d3461;font-weight:normal;font-style:italic;white-space:pre;-webkit-text-stroke:0.08px #1d3461;left:129.00px;transform-origin:left center;transform:scaleX(1.1337);">Describe how you will archive, delete, and transfer hardcopy and softcopy technical</div>
<div style="position:absolute;top:377.71px;font-family:'Liberation Sans',sans-serif;font-size:6.6px;line-height:6.6px;color:#1d3461;font-weight:normal;font-style:italic;white-space:pre;-webkit-text-stroke:0.08px #1d3461;left:129.00px;transform-origin:left center;transform:scaleX(1.1077);">documentation in the current system being to other systems. You may consider scanning</div>
<div style="position:absolute;top:385.51px;font-family:'Liberation Sans',sans-serif;font-size:6.6px;line-height:6.6px;color:#1d3461;font-weight:normal;font-style:italic;white-space:pre;-webkit-text-stroke:0.08px #1d3461;left:129.00px;transform-origin:left center;transform:scaleX(1.1211);">hardcopy documentation into PDF and archiving these if it proves more cost effective.</div>
<div style="position:absolute;top:403.37px;font-family:'Liberation Sans',sans-serif;font-size:6.3px;line-height:6.3px;color:#404040;font-weight:bold;font-style:normal;white-space:pre;left:127.00px;transform-origin:left center;transform:scaleX(1.0653);">Document Identifier</div>
<div style="position:absolute;top:403.37px;font-family:'Liberation Sans',sans-serif;font-size:6.3px;line-height:6.3px;color:#404040;font-weight:bold;font-style:normal;white-space:pre;left:215.00px;transform-origin:left center;transform:scaleX(1.0681);">Description</div>
<div style="position:absolute;top:403.37px;font-family:'Liberation Sans',sans-serif;font-size:6.3px;line-height:6.3px;color:#404040;font-weight:bold;font-style:normal;white-space:pre;left:327.00px;transform-origin:left center;transform:scaleX(1.1054);">Location (e.g., Database/Server)</div>
<div style="position:absolute;top:482.51px;font-family:'Liberation Sans',sans-serif;font-size:10.5px;line-height:10.5px;color:#406c9c;font-weight:normal;font-style:normal;white-space:pre;left:120.00px;transform-origin:left center;transform:scaleX(0.9583);">5.4</div>
<div style="position:absolute;top:482.51px;font-family:'Liberation Sans',sans-serif;font-size:10.5px;line-height:10.5px;color:#406c9c;font-weight:normal;font-style:normal;white-space:pre;left:158.00px;transform-origin:left center;transform:scaleX(1.0758);">Equipment Disposition</div>
<div style="position:absolute;top:503.11px;font-family:'Liberation Sans',sans-serif;font-size:6.6px;line-height:6.6px;color:#1d3461;font-weight:normal;font-style:italic;white-space:pre;-webkit-text-stroke:0.08px #1d3461;left:129.40px;transform-origin:left center;transform:scaleX(1.1236);">Describe how you will archive, delete, and transfer hardware and other equipment in the</div>
<div style="position:absolute;top:510.51px;font-family:'Liberation Sans',sans-serif;font-size:6.6px;line-height:6.6px;color:#1d3461;font-weight:normal;font-style:italic;white-space:pre;-webkit-text-stroke:0.08px #1d3461;left:129.40px;transform-origin:left center;transform:scaleX(1.0737);">current system being to other systems.</div>
<div style="position:absolute;top:528.37px;font-family:'Liberation Sans',sans-serif;font-size:6.3px;line-height:6.3px;color:#404040;font-weight:bold;font-style:normal;white-space:pre;left:127.00px;transform-origin:left center;transform:scaleX(1.0678);">Equipment Identifier</div>
<div style="position:absolute;top:528.37px;font-family:'Liberation Sans',sans-serif;font-size:6.3px;line-height:6.3px;color:#404040;font-weight:bold;font-style:normal;white-space:pre;left:215.00px;transform-origin:left center;transform:scaleX(1.0681);">Description</div>
<div style="position:absolute;top:528.37px;font-family:'Liberation Sans',sans-serif;font-size:6.3px;line-height:6.3px;color:#404040;font-weight:bold;font-style:normal;white-space:pre;left:327.00px;transform-origin:left center;transform:scaleX(1.1054);">Location (e.g., Database/Server)</div>
<div style="position:absolute;top:608.91px;font-family:'Liberation Sans',sans-serif;font-size:10.5px;line-height:10.5px;color:#406c9c;font-weight:normal;font-style:normal;white-space:pre;left:120.00px;transform-origin:left center;transform:scaleX(0.9583);">5.5</div>
<div style="position:absolute;top:608.91px;font-family:'Liberation Sans',sans-serif;font-size:10.5px;line-height:10.5px;color:#406c9c;font-weight:normal;font-style:normal;white-space:pre;left:158.00px;transform-origin:left center;transform:scaleX(1.0656);">Software Disposition</div>
<div style="position:absolute;top:628.51px;font-family:'Liberation Sans',sans-serif;font-size:6.6px;line-height:6.6px;color:#1d3461;font-weight:normal;font-style:italic;white-space:pre;-webkit-text-stroke:0.08px #1d3461;left:129.40px;transform-origin:left center;transform:scaleX(1.1155);">Describe how you will archive, delete, and transfer software library files and related technical</div>
<div style="position:absolute;top:636.01px;font-family:'Liberation Sans',sans-serif;font-size:6.6px;line-height:6.6px;color:#1d3461;font-weight:normal;font-style:italic;white-space:pre;-webkit-text-stroke:0.08px #1d3461;left:129.40px;transform-origin:left center;transform:scaleX(1.1067);">documentation in the current system being to other systems.</div>
<div style="position:absolute;top:220.37px;font-family:'Liberation Sans',sans-serif;font-size:6.3px;line-height:6.3px;color:#404040;font-weight:bold;font-style:normal;white-space:pre;left:543.30px;transform-origin:left center;transform:scaleX(1.0739);">Software Identifier</div>
<div style="position:absolute;top:220.37px;font-family:'Liberation Sans',sans-serif;font-size:6.3px;line-height:6.3px;color:#404040;font-weight:bold;font-style:normal;white-space:pre;left:631.70px;transform-origin:left center;transform:scaleX(1.0537);">Description</div>
<div style="position:absolute;top:220.37px;font-family:'Liberation Sans',sans-serif;font-size:6.3px;line-height:6.3px;color:#404040;font-weight:bold;font-style:normal;white-space:pre;left:743.30px;transform-origin:left center;transform:scaleX(1.1023);">Location (e.g., Database/Server)</div>
<div style="position:absolute;top:300.61px;font-family:'Liberation Sans',sans-serif;font-size:10.5px;line-height:10.5px;color:#406c9c;font-weight:normal;font-style:normal;white-space:pre;left:536.50px;transform-origin:left center;transform:scaleX(0.9583);">5.6</div>
<div style="position:absolute;top:300.61px;font-family:'Liberation Sans',sans-serif;font-size:10.5px;line-height:10.5px;color:#406c9c;font-weight:normal;font-style:normal;white-space:pre;left:574.50px;transform-origin:left center;transform:scaleX(1.0780);">Records Disposition Schedule</div>
<div style="position:absolute;top:319.71px;font-family:'Liberation Sans',sans-serif;font-size:6.6px;line-height:6.6px;color:#1d3461;font-weight:normal;font-style:italic;white-space:pre;-webkit-text-stroke:0.08px #1d3461;left:546.00px;transform-origin:left center;transform:scaleX(1.1151);">Describes the plan for records management, for example:</div>
<div style="position:absolute;top:333.21px;font-family:'Liberation Sans',sans-serif;font-size:6.6px;line-height:6.6px;color:#1d3461;font-weight:normal;font-style:italic;white-space:pre;-webkit-text-stroke:0.08px #1d3461;left:570.00px;transform-origin:left center;transform:scaleX(1.1072);">One year after disposition, you can destroy or delete records for systems that are not</div>
<div style="position:absolute;top:339.71px;font-family:'Liberation Sans',sans-serif;font-size:6.6px;line-height:6.6px;color:#1d3461;font-weight:normal;font-style:italic;white-space:pre;-webkit-text-stroke:0.08px #1d3461;left:570.00px;transform-origin:left center;transform:scaleX(1.1214);">implemented.</div>
<div style="position:absolute;top:354.21px;font-family:'Liberation Sans',sans-serif;font-size:6.6px;line-height:6.6px;color:#1d3461;font-weight:normal;font-style:italic;white-space:pre;-webkit-text-stroke:0.08px #1d3461;left:570.00px;transform-origin:left center;transform:scaleX(1.0966);">Five years after disposition, you can destroy records for projects that are</div>
<div style="position:absolute;top:360.71px;font-family:'Liberation Sans',sans-serif;font-size:6.6px;line-height:6.6px;color:#1d3461;font-weight:normal;font-style:italic;white-space:pre;-webkit-text-stroke:0.08px #1d3461;left:570.00px;transform-origin:left center;transform:scaleX(1.1214);">implemented.</div>
<div style="position:absolute;top:373.21px;font-family:'Liberation Sans',sans-serif;font-size:6.6px;line-height:6.6px;color:#1d3461;font-weight:normal;font-style:italic;white-space:pre;-webkit-text-stroke:0.08px #1d3461;left:570.00px;transform-origin:left center;transform:scaleX(1.0909);">Three years after disposition, you can destroy installation and testing records.</div>
<div style="position:absolute;top:390.00px;font-family:'Liberation Sans',sans-serif;font-size:6.5px;line-height:6.5px;color:#222;font-weight:bold;font-style:normal;white-space:pre;left:565.00px;transform-origin:left center;transform:scaleX(1.0724);">Note</div>
<div style="position:absolute;top:390.00px;font-family:'Liberation Sans',sans-serif;font-size:6.5px;line-height:6.5px;color:#333;font-weight:normal;font-style:normal;white-space:pre;left:580.50px;transform-origin:left center;transform:scaleX(1.0365);">: Retain the documentation as long as data has not been deleted from the</div>
<div style="position:absolute;top:398.90px;font-family:'Liberation Sans',sans-serif;font-size:6.5px;line-height:6.5px;color:#333;font-weight:normal;font-style:normal;white-space:pre;left:565.00px;transform-origin:left center;transform:scaleX(0.9819);">system.</div>
<div style="position:absolute;top:419.77px;font-family:'Liberation Sans',sans-serif;font-size:6.3px;line-height:6.3px;color:#2a2a2a;font-weight:normal;font-style:normal;white-space:pre;left:540.20px;transform-origin:left center;transform:scaleX(1.1794);">Tasks</div>
<div style="position:absolute;top:419.77px;font-family:'Liberation Sans',sans-serif;font-size:6.3px;line-height:6.3px;color:#2a2a2a;font-weight:normal;font-style:normal;white-space:pre;left:628.30px;transform-origin:left center;transform:scaleX(1.1580);">3 months</div>
<div style="position:absolute;top:419.77px;font-family:'Liberation Sans',sans-serif;font-size:6.3px;line-height:6.3px;color:#2a2a2a;font-weight:normal;font-style:normal;white-space:pre;left:676.20px;transform-origin:left center;transform:scaleX(1.1580);">6 months</div>
<div style="position:absolute;top:419.77px;font-family:'Liberation Sans',sans-serif;font-size:6.3px;line-height:6.3px;color:#2a2a2a;font-weight:normal;font-style:normal;white-space:pre;left:723.80px;transform-origin:left center;transform:scaleX(1.1860);">1 Year</div>
<div style="position:absolute;top:419.77px;font-family:'Liberation Sans',sans-serif;font-size:6.3px;line-height:6.3px;color:#2a2a2a;font-weight:normal;font-style:normal;white-space:pre;left:771.60px;transform-origin:left center;transform:scaleX(1.1972);">3 Year</div>
<div style="position:absolute;top:419.77px;font-family:'Liberation Sans',sans-serif;font-size:6.3px;line-height:6.3px;color:#2a2a2a;font-weight:normal;font-style:normal;white-space:pre;left:819.70px;transform-origin:left center;transform:scaleX(1.2084);">5 Year</div>
<div style="position:absolute;top:439.67px;font-family:'Liberation Sans',sans-serif;font-size:6.3px;line-height:6.3px;color:#2a2a2a;font-weight:normal;font-style:normal;white-space:pre;left:540.20px;transform-origin:left center;transform:scaleX(1.1604);">Identify task</div>
<div style="position:absolute;top:458.37px;font-family:'Liberation Sans',sans-serif;font-size:6.3px;line-height:6.3px;color:#2a2a2a;font-weight:normal;font-style:normal;white-space:pre;left:540.20px;transform-origin:left center;transform:scaleX(1.1604);">Identify task</div>
<div style="position:absolute;top:477.37px;font-family:'Liberation Sans',sans-serif;font-size:6.3px;line-height:6.3px;color:#2a2a2a;font-weight:normal;font-style:normal;white-space:pre;left:540.20px;transform-origin:left center;transform:scaleX(1.1604);">Identify task</div>
<div style="position:absolute;top:500.01px;font-family:'Liberation Sans',sans-serif;font-size:10.5px;line-height:10.5px;color:#406c9c;font-weight:normal;font-style:normal;white-space:pre;left:536.00px;transform-origin:left center;transform:scaleX(0.9583);">5.7</div>
<div style="position:absolute;top:500.01px;font-family:'Liberation Sans',sans-serif;font-size:10.5px;line-height:10.5px;color:#406c9c;font-weight:normal;font-style:normal;white-space:pre;left:574.00px;transform-origin:left center;transform:scaleX(1.0822);">Future Access</div>
<div style="position:absolute;top:520.01px;font-family:'Liberation Sans',sans-serif;font-size:6.6px;line-height:6.6px;color:#1d3461;font-weight:normal;font-style:italic;white-space:pre;-webkit-text-stroke:0.08px #1d3461;left:545.60px;transform-origin:left center;transform:scaleX(1.1332);">Describe the plan for future access to software, data, and lifecycle documentation for the</div>
<div style="position:absolute;top:526.81px;font-family:'Liberation Sans',sans-serif;font-size:6.6px;line-height:6.6px;color:#1d3461;font-weight:normal;font-style:italic;white-space:pre;-webkit-text-stroke:0.08px #1d3461;left:545.60px;transform-origin:left center;transform:scaleX(1.0995);">system being shut down.</div>
<div style="position:absolute;top:545.97px;font-family:'Liberation Sans',sans-serif;font-size:6.3px;line-height:6.3px;color:#2a2a2a;font-weight:normal;font-style:normal;white-space:pre;left:540.10px;transform-origin:left center;transform:scaleX(1.1577);">Future Access</div>
<div style="position:absolute;top:545.97px;font-family:'Liberation Sans',sans-serif;font-size:6.3px;line-height:6.3px;color:#2a2a2a;font-weight:normal;font-style:normal;white-space:pre;left:628.40px;transform-origin:left center;transform:scaleX(1.1794);">Tasks</div>
<div style="position:absolute;top:566.17px;font-family:'Liberation Sans',sans-serif;font-size:6.3px;line-height:6.3px;color:#2a2a2a;font-weight:normal;font-style:normal;white-space:pre;left:540.10px;transform-origin:left center;transform:scaleX(1.1584);">Software task</div>
<div style="position:absolute;top:566.17px;font-family:'Liberation Sans',sans-serif;font-size:6.3px;line-height:6.3px;color:#2a2a2a;font-weight:normal;font-style:normal;white-space:pre;left:628.40px;transform-origin:left center;transform:scaleX(1.1633);">Describe steps to reactive system’s software</div>
<div style="position:absolute;top:584.37px;font-family:'Liberation Sans',sans-serif;font-size:6.3px;line-height:6.3px;color:#2a2a2a;font-weight:normal;font-style:normal;white-space:pre;left:540.10px;transform-origin:left center;transform:scaleX(1.1387);">Data task</div>
<div style="position:absolute;top:584.37px;font-family:'Liberation Sans',sans-serif;font-size:6.3px;line-height:6.3px;color:#2a2a2a;font-weight:normal;font-style:normal;white-space:pre;left:628.40px;transform-origin:left center;transform:scaleX(1.1654);">Describe steps to locate and reactive system’ data</div>
<div style="position:absolute;top:603.97px;font-family:'Liberation Sans',sans-serif;font-size:6.3px;line-height:6.3px;color:#2a2a2a;font-weight:normal;font-style:normal;white-space:pre;left:540.10px;transform-origin:left center;transform:scaleX(1.1500);">Hardware task</div>
<div style="position:absolute;top:603.97px;font-family:'Liberation Sans',sans-serif;font-size:6.3px;line-height:6.3px;color:#2a2a2a;font-weight:normal;font-style:normal;white-space:pre;left:628.40px;transform-origin:left center;transform:scaleX(1.1669);">Describe steps to reactive system’s hardware</div>
<div style="position:absolute;top:622.97px;font-family:'Liberation Sans',sans-serif;font-size:6.3px;line-height:6.3px;color:#2a2a2a;font-weight:normal;font-style:normal;white-space:pre;left:540.10px;transform-origin:left center;transform:scaleX(1.1571);">Documentation task</div>
<div style="position:absolute;top:622.97px;font-family:'Liberation Sans',sans-serif;font-size:6.3px;line-height:6.3px;color:#2a2a2a;font-weight:normal;font-style:normal;white-space:pre;left:628.40px;transform-origin:left center;transform:scaleX(1.1650);">Describe steps to locate and use technical documentation</div>
<div style="position:absolute;top:220.37px;font-family:'Liberation Sans',sans-serif;font-size:6.3px;line-height:6.3px;color:#2a2a2a;font-weight:normal;font-style:normal;white-space:pre;left:956.25px;transform-origin:left center;transform:scaleX(1.1680);">Equipment task</div>
<div style="position:absolute;top:220.37px;font-family:'Liberation Sans',sans-serif;font-size:6.3px;line-height:6.3px;color:#2a2a2a;font-weight:normal;font-style:normal;white-space:pre;left:1044.50px;transform-origin:left center;transform:scaleX(1.1668);">Describe steps to reactive system equipment</div>
<div style="position:absolute;top:237.71px;font-family:'Liberation Sans',sans-serif;font-size:6.6px;line-height:6.6px;color:#1d3461;font-weight:normal;font-style:italic;white-space:pre;-webkit-text-stroke:0.08px #1d3461;left:962.50px;transform-origin:left center;transform:scaleX(1.1222);">Share with all employees reference copies of system development lifecycle documentation.</div>
<div style="position:absolute;top:245.86px;font-family:'Liberation Sans',sans-serif;font-size:6.6px;line-height:6.6px;color:#1d3461;font-weight:normal;font-style:italic;white-space:pre;-webkit-text-stroke:0.08px #1d3461;left:962.50px;transform-origin:left center;transform:scaleX(1.1138);">While most of this material will be made generally available, some may be restricted to more</div>
<div style="position:absolute;top:254.01px;font-family:'Liberation Sans',sans-serif;font-size:6.6px;line-height:6.6px;color:#1d3461;font-weight:normal;font-style:italic;white-space:pre;-webkit-text-stroke:0.08px #1d3461;left:962.50px;transform-origin:left center;transform:scaleX(1.1242);">targeted audiences. The Project Manager will send electronic copies of all project</div>
<div style="position:absolute;top:262.16px;font-family:'Liberation Sans',sans-serif;font-size:6.6px;line-height:6.6px;color:#1d3461;font-weight:normal;font-style:italic;white-space:pre;-webkit-text-stroke:0.08px #1d3461;left:962.50px;transform-origin:left center;transform:scaleX(1.1287);">documentation to document storage at major milestones and upon system implementation.</div>
<div style="position:absolute;top:270.31px;font-family:'Liberation Sans',sans-serif;font-size:6.6px;line-height:6.6px;color:#1d3461;font-weight:normal;font-style:italic;white-space:pre;-webkit-text-stroke:0.08px #1d3461;left:962.50px;transform-origin:left center;transform:scaleX(1.1209);">Project managers are responsible for maintaining project documentation for records</div>
<div style="position:absolute;top:278.46px;font-family:'Liberation Sans',sans-serif;font-size:6.6px;line-height:6.6px;color:#1d3461;font-weight:normal;font-style:italic;white-space:pre;-webkit-text-stroke:0.08px #1d3461;left:962.50px;transform-origin:left center;transform:scaleX(1.1186);">management purposes.</div>
<div style="position:absolute;top:296.11px;font-family:'Liberation Sans',sans-serif;font-size:10.5px;line-height:10.5px;color:#406c9c;font-weight:normal;font-style:normal;white-space:pre;left:952.50px;transform-origin:left center;transform:scaleX(0.9583);">5.8</div>
<div style="position:absolute;top:296.11px;font-family:'Liberation Sans',sans-serif;font-size:10.5px;line-height:10.5px;color:#406c9c;font-weight:normal;font-style:normal;white-space:pre;left:990.50px;transform-origin:left center;transform:scaleX(1.0924);">Information Security</div>
<div style="position:absolute;top:317.21px;font-family:'Liberation Sans',sans-serif;font-size:6.6px;line-height:6.6px;color:#1d3461;font-weight:normal;font-style:italic;white-space:pre;-webkit-text-stroke:0.08px #1d3461;left:962.00px;transform-origin:left center;transform:scaleX(1.1120);">[Identify information security protocols and procedures related to the disposition of system</div>
<div style="position:absolute;top:324.01px;font-family:'Liberation Sans',sans-serif;font-size:6.6px;line-height:6.6px;color:#1d3461;font-weight:normal;font-style:italic;white-space:pre;-webkit-text-stroke:0.08px #1d3461;left:962.00px;transform-origin:left center;transform:scaleX(1.1636);">data.]</div>
<div style="position:absolute;top:341.37px;font-family:'Liberation Sans',sans-serif;font-size:6.3px;line-height:6.3px;color:#2a2a2a;font-weight:normal;font-style:normal;white-space:pre;left:956.25px;transform-origin:left center;transform:scaleX(1.1736);">Security</div>
<div style="position:absolute;top:341.37px;font-family:'Liberation Sans',sans-serif;font-size:6.3px;line-height:6.3px;color:#2a2a2a;font-weight:normal;font-style:normal;white-space:pre;left:1044.50px;transform-origin:left center;transform:scaleX(1.2229);">Tasks</div>
<div style="position:absolute;top:361.37px;font-family:'Liberation Sans',sans-serif;font-size:6.3px;line-height:6.3px;color:#2a2a2a;font-weight:normal;font-style:normal;white-space:pre;left:956.25px;transform-origin:left center;transform:scaleX(1.1684);">Protocol</div>
<div style="position:absolute;top:361.37px;font-family:'Liberation Sans',sans-serif;font-size:6.3px;line-height:6.3px;color:#2a2a2a;font-weight:normal;font-style:normal;white-space:pre;left:1044.50px;transform-origin:left center;transform:scaleX(1.1709);">Describe information security protocols related to the disposition of</div>
<div style="position:absolute;top:372.87px;font-family:'Liberation Sans',sans-serif;font-size:6.3px;line-height:6.3px;color:#2a2a2a;font-weight:normal;font-style:normal;white-space:pre;left:1044.50px;transform-origin:left center;transform:scaleX(1.1668);">system data, e.g. Sarbanes Oxley requirements, legislation, state laws</div>
<div style="position:absolute;top:382.87px;font-family:'Liberation Sans',sans-serif;font-size:6.3px;line-height:6.3px;color:#2a2a2a;font-weight:normal;font-style:normal;white-space:pre;left:1044.50px;transform-origin:left center;transform:scaleX(1.1721);">regarding data retention periods.</div>
<div style="position:absolute;top:401.37px;font-family:'Liberation Sans',sans-serif;font-size:6.3px;line-height:6.3px;color:#2a2a2a;font-weight:normal;font-style:normal;white-space:pre;left:956.25px;transform-origin:left center;transform:scaleX(1.1596);">Procedure</div>
<div style="position:absolute;top:401.37px;font-family:'Liberation Sans',sans-serif;font-size:6.3px;line-height:6.3px;color:#2a2a2a;font-weight:normal;font-style:normal;white-space:pre;left:1044.50px;transform-origin:left center;transform:scaleX(1.1705);">Identify procedures related to the disposition of system data, e.g.</div>
<div style="position:absolute;top:412.87px;font-family:'Liberation Sans',sans-serif;font-size:6.3px;line-height:6.3px;color:#2a2a2a;font-weight:normal;font-style:normal;white-space:pre;left:1044.50px;transform-origin:left center;transform:scaleX(1.1695);">access rights, permissions, shared folders, closing accounts and</div>
<div style="position:absolute;top:422.87px;font-family:'Liberation Sans',sans-serif;font-size:6.3px;line-height:6.3px;color:#2a2a2a;font-weight:normal;font-style:normal;white-space:pre;left:1044.50px;transform-origin:left center;transform:scaleX(1.1619);">backing up data.</div>
<div style="position:absolute;top:5.26px;font-family:'Liberation Sans',sans-serif;font-size:11.5px;line-height:11.5px;color:#444;font-weight:normal;font-style:normal;white-space:pre;left:543.40px;transform-origin:left center;transform:scaleX(0.9055);">Disposition Plan Template - Blue Theme - Coverpage Image - Word</div>
<div style="position:absolute;top:27.49px;font-family:'Liberation Sans',sans-serif;font-size:11px;line-height:11px;color:#fff;font-weight:normal;font-style:normal;white-space:pre;left:17.00px;transform-origin:left center;transform:scaleX(0.7962);">FILE</div>
<div style="position:absolute;top:27.49px;font-family:'Liberation Sans',sans-serif;font-size:11px;line-height:11px;color:#2b579a;font-weight:normal;font-style:normal;white-space:pre;left:67.00px;transform-origin:left center;transform:scaleX(0.9394);">HOME</div>
<div style="position:absolute;top:27.29px;font-family:'Liberation Sans',sans-serif;font-size:11px;line-height:11px;color:#505050;font-weight:normal;font-style:normal;white-space:pre;left:122.60px;transform-origin:left center;transform:scaleX(0.7822);">INSERT</div>
<div style="position:absolute;top:27.29px;font-family:'Liberation Sans',sans-serif;font-size:11px;line-height:11px;color:#505050;font-weight:normal;font-style:normal;white-space:pre;left:180.00px;transform-origin:left center;transform:scaleX(0.8296);">DESIGN</div>
<div style="position:absolute;top:27.29px;font-family:'Liberation Sans',sans-serif;font-size:11px;line-height:11px;color:#505050;font-weight:normal;font-style:normal;white-space:pre;left:240.50px;transform-origin:left center;transform:scaleX(0.8590);">PAGE LAYOUT</div>
<div style="position:absolute;top:27.29px;font-family:'Liberation Sans',sans-serif;font-size:11px;line-height:11px;color:#505050;font-weight:normal;font-style:normal;white-space:pre;left:331.60px;transform-origin:left center;transform:scaleX(0.7741);">REFERENCES</div>
<div style="position:absolute;top:27.29px;font-family:'Liberation Sans',sans-serif;font-size:11px;line-height:11px;color:#505050;font-weight:normal;font-style:normal;white-space:pre;left:415.80px;transform-origin:left center;transform:scaleX(0.8977);">MAILINGS</div>
<div style="position:absolute;top:27.29px;font-family:'Liberation Sans',sans-serif;font-size:11px;line-height:11px;color:#505050;font-weight:normal;font-style:normal;white-space:pre;left:488.70px;transform-origin:left center;transform:scaleX(0.7971);">REVIEW</div>
<div style="position:absolute;top:27.29px;font-family:'Liberation Sans',sans-serif;font-size:11px;line-height:11px;color:#505050;font-weight:normal;font-style:normal;white-space:pre;left:549.00px;transform-origin:left center;transform:scaleX(0.8107);">VIEW</div>
<div style="position:absolute;top:27.29px;font-family:'Liberation Sans',sans-serif;font-size:11px;line-height:11px;color:#505050;font-weight:normal;font-style:normal;white-space:pre;left:597.50px;transform-origin:left center;transform:scaleX(0.8015);">DEVELOPER</div>
<div style="position:absolute;top:27.19px;font-family:'Liberation Sans',sans-serif;font-size:11px;line-height:11px;color:#444;font-weight:normal;font-style:normal;white-space:pre;left:1303.00px;transform-origin:left center;transform:scaleX(0.9442);">Ivan Walsh</div>
<div style="position:absolute;top:26.49px;font-family:'Liberation Sans',sans-serif;font-size:13px;line-height:13px;color:#fff;font-weight:normal;font-style:normal;white-space:pre;left:1375.50px;transform-origin:left center;transform:scaleX(1.0378);">K</div>
<div style="position:absolute;top:112.11px;font-family:'Liberation Sans',sans-serif;font-size:10.5px;line-height:10.5px;color:#555;font-weight:normal;font-style:normal;white-space:pre;left:40.00px;transform-origin:left center;transform:scaleX(0.9566);">Clipboard</div>
<div style="position:absolute;top:112.11px;font-family:'Liberation Sans',sans-serif;font-size:10.5px;line-height:10.5px;color:#555;font-weight:normal;font-style:normal;white-space:pre;left:236.00px;transform-origin:left center;transform:scaleX(0.9517);">Font</div>
<div style="position:absolute;top:112.11px;font-family:'Liberation Sans',sans-serif;font-size:10.5px;line-height:10.5px;color:#555;font-weight:normal;font-style:normal;white-space:pre;left:436.00px;transform-origin:left center;transform:scaleX(0.9379);">Paragraph</div>
<div style="position:absolute;top:112.11px;font-family:'Liberation Sans',sans-serif;font-size:10.5px;line-height:10.5px;color:#555;font-weight:normal;font-style:normal;white-space:pre;left:905.00px;transform-origin:left center;transform:scaleX(0.8568);">Styles</div>
<div style="position:absolute;top:112.11px;font-family:'Liberation Sans',sans-serif;font-size:10.5px;line-height:10.5px;color:#555;font-weight:normal;font-style:normal;white-space:pre;left:1302.40px;transform-origin:left center;">Editing</div>
<div style="position:absolute;top:81.11px;font-family:'Liberation Sans',sans-serif;font-size:10.5px;line-height:10.5px;color:#444;font-weight:normal;font-style:normal;white-space:pre;left:10.00px;transform-origin:left center;transform:scaleX(0.8935);">Paste</div>
<div style="position:absolute;top:52.11px;font-family:'Liberation Sans',sans-serif;font-size:10.5px;line-height:10.5px;color:#a8a8a8;font-weight:normal;font-style:normal;white-space:pre;left:60.00px;transform-origin:left center;transform:scaleX(0.9790);">Cut</div>
<div style="position:absolute;top:72.11px;font-family:'Liberation Sans',sans-serif;font-size:10.5px;line-height:10.5px;color:#a8a8a8;font-weight:normal;font-style:normal;white-space:pre;left:60.00px;transform-origin:left center;transform:scaleX(0.9382);">Copy</div>
<div style="position:absolute;top:91.61px;font-family:'Liberation Sans',sans-serif;font-size:10.5px;line-height:10.5px;color:#444;font-weight:normal;font-style:normal;white-space:pre;left:60.00px;transform-origin:left center;transform:scaleX(0.9791);">Format Painter</div>
<div style="position:absolute;top:58.69px;font-family:'Liberation Sans',sans-serif;font-size:11px;line-height:11px;color:#333;font-weight:normal;font-style:normal;white-space:pre;left:145.00px;transform-origin:left center;transform:scaleX(0.9539);">Arial</div>
<div style="position:absolute;top:58.69px;font-family:'Liberation Sans',sans-serif;font-size:11px;line-height:11px;color:#333;font-weight:normal;font-style:normal;white-space:pre;left:227.00px;transform-origin:left center;transform:scaleX(0.8163);">10</div>
<div style="position:absolute;top:84.91px;font-family:'Liberation Sans',sans-serif;font-size:10.5px;line-height:10.5px;color:#555;font-weight:normal;font-style:normal;white-space:pre;left:586.60px;transform-origin:left center;transform:scaleX(0.9477);">¶ Body</div>
<div style="position:absolute;top:84.91px;font-family:'Liberation Sans',sans-serif;font-size:10.5px;line-height:10.5px;color:#555;font-weight:normal;font-style:normal;white-space:pre;left:642.60px;transform-origin:left center;transform:scaleX(0.9788);">¶ Caption</div>
<div style="position:absolute;top:84.91px;font-family:'Liberation Sans',sans-serif;font-size:10.5px;line-height:10.5px;color:#555;font-weight:normal;font-style:normal;white-space:pre;left:705.00px;transform-origin:left center;transform:scaleX(0.9525);">Heading 1</div>
<div style="position:absolute;top:84.91px;font-family:'Liberation Sans',sans-serif;font-size:10.5px;line-height:10.5px;color:#555;font-weight:normal;font-style:normal;white-space:pre;left:768.00px;transform-origin:left center;transform:scaleX(0.9608);">Heading 2</div>
<div style="position:absolute;top:84.91px;font-family:'Liberation Sans',sans-serif;font-size:10.5px;line-height:10.5px;color:#555;font-weight:normal;font-style:normal;white-space:pre;left:826.00px;transform-origin:left center;transform:scaleX(0.9745);">¶ Heading 3</div>
<div style="position:absolute;top:84.91px;font-family:'Liberation Sans',sans-serif;font-size:10.5px;line-height:10.5px;color:#555;font-weight:normal;font-style:normal;white-space:pre;left:889.40px;transform-origin:left center;transform:scaleX(0.9639);">¶ Heading 4</div>
<div style="position:absolute;top:84.91px;font-family:'Liberation Sans',sans-serif;font-size:10.5px;line-height:10.5px;color:#555;font-weight:normal;font-style:normal;white-space:pre;left:952.00px;transform-origin:left center;transform:scaleX(0.9745);">¶ Heading 5</div>
<div style="position:absolute;top:84.91px;font-family:'Liberation Sans',sans-serif;font-size:10.5px;line-height:10.5px;color:#555;font-weight:normal;font-style:normal;white-space:pre;left:1015.00px;transform-origin:left center;transform:scaleX(0.9745);">¶ Heading 6</div>
<div style="position:absolute;top:84.91px;font-family:'Liberation Sans',sans-serif;font-size:10.5px;line-height:10.5px;color:#555;font-weight:normal;font-style:normal;white-space:pre;left:1078.00px;transform-origin:left center;transform:scaleX(0.9674);">¶ Heading 7</div>
<div style="position:absolute;top:84.91px;font-family:'Liberation Sans',sans-serif;font-size:10.5px;line-height:10.5px;color:#555;font-weight:normal;font-style:normal;white-space:pre;left:1141.00px;transform-origin:left center;transform:scaleX(0.9674);">¶ Heading 8</div>
<div style="position:absolute;top:84.91px;font-family:'Liberation Sans',sans-serif;font-size:10.5px;line-height:10.5px;color:#555;font-weight:normal;font-style:normal;white-space:pre;left:1203.80px;transform-origin:left center;transform:scaleX(0.9781);">¶ Heading 9</div>
<div style="position:absolute;top:63.14px;font-family:'Liberation Serif',sans-serif;font-size:12px;line-height:12px;color:#222;font-weight:normal;font-style:normal;white-space:pre;left:576.30px;transform-origin:left center;transform:scaleX(1.1340);">AaBbCcI</div>
<div style="position:absolute;top:62.84px;font-family:'Liberation Sans',sans-serif;font-size:12px;line-height:12px;color:#1f3864;font-weight:normal;font-style:italic;white-space:pre;left:639.20px;transform-origin:left center;transform:scaleX(1.0853);">AaBbCcI</div>
<div style="position:absolute;top:53.78px;font-family:'Liberation Sans',sans-serif;font-size:24px;line-height:24px;color:#2e6cb0;font-weight:normal;font-style:normal;white-space:pre;left:705.40px;transform-origin:left center;transform:scaleX(0.4117);">1</div>
<div style="position:absolute;top:53.36px;font-family:'Liberation Sans',sans-serif;font-size:24.5px;line-height:24.5px;color:#2e6cb0;font-weight:normal;font-style:normal;white-space:pre;clip-path:inset(0 4px 0 0);left:730.60px;transform-origin:left center;transform:scaleX(0.9443);">Ac</div>
<div style="position:absolute;top:59.26px;font-family:'Liberation Sans',sans-serif;font-size:18px;line-height:18px;color:#2e6cb0;font-weight:normal;font-style:normal;white-space:pre;left:766.60px;transform-origin:left center;transform:scaleX(0.7990);">1.1</div>
<div style="position:absolute;top:59.91px;font-family:'Liberation Sans',sans-serif;font-size:17px;line-height:17px;color:#2e6cb0;font-weight:normal;font-style:normal;white-space:pre;clip-path:inset(0 2.5px 0 0);left:801.00px;transform-origin:left center;transform:scaleX(0.9071);">Ac</div>
<div style="position:absolute;top:59.38px;font-family:'Liberation Sans',sans-serif;font-size:17.5px;line-height:17.5px;color:#2e6cb0;font-weight:normal;font-style:normal;white-space:pre;left:829.40px;transform-origin:left center;transform:scaleX(0.8604);">1.1.1</div>
<div style="position:absolute;top:62.15px;font-family:'Liberation Sans',sans-serif;font-size:14px;line-height:14px;color:#2e6cb0;font-weight:normal;font-style:normal;white-space:pre;left:874.90px;transform-origin:left center;transform:scaleX(1.2851);">/</div>
<div style="position:absolute;top:61.22px;font-family:'Liberation Sans',sans-serif;font-size:14.5px;line-height:14.5px;color:#2e6cb0;font-weight:normal;font-style:normal;white-space:pre;left:892.30px;transform-origin:left center;transform:scaleX(0.8637);">1.1.1.1</div>
<div style="position:absolute;top:62.99px;font-family:'Liberation Sans',sans-serif;font-size:13px;line-height:13px;color:#2e6cb0;font-weight:normal;font-style:normal;white-space:pre;left:940.90px;transform-origin:left center;transform:scaleX(0.8276);">,</div>
<div style="position:absolute;top:62.24px;font-family:'Liberation Sans',sans-serif;font-size:12px;line-height:12px;color:#3b3aa0;font-weight:normal;font-style:normal;white-space:pre;left:954.60px;transform-origin:left center;transform:scaleX(0.9161);">1.1.1.1.1</div>
<div style="position:absolute;top:62.61px;font-family:'Liberation Sans',sans-serif;font-size:10.5px;line-height:10.5px;color:#3b3aa0;font-weight:normal;font-style:normal;white-space:pre;left:1017.80px;transform-origin:left center;transform:scaleX(0.9612);">1.1.1.1.1.1</div>
<div style="position:absolute;top:61.22px;font-family:'Liberation Sans',sans-serif;font-size:14.5px;line-height:14.5px;color:#1c4f8c;font-weight:normal;font-style:normal;white-space:pre;left:1081.50px;transform-origin:left center;transform:scaleX(0.8859);">1.1.1.1.1</div>
<div style="position:absolute;top:61.02px;font-family:'Liberation Sans',sans-serif;font-size:14.5px;line-height:14.5px;color:#1c4f8c;font-weight:normal;font-style:italic;white-space:pre;left:1144.00px;transform-origin:left center;transform:scaleX(0.9143);">1.1.1.1.1</div>
<div style="position:absolute;top:61.45px;font-family:'Liberation Sans',sans-serif;font-size:14px;line-height:14px;color:#1c4f8c;font-weight:normal;font-style:normal;white-space:pre;left:1207.00px;transform-origin:left center;transform:scaleX(0.8614);">1.1.1.1.1.</div>
<div style="position:absolute;top:52.11px;font-family:'Liberation Sans',sans-serif;font-size:10.5px;line-height:10.5px;color:#444;font-weight:normal;font-style:normal;white-space:pre;left:1307.00px;transform-origin:left center;transform:scaleX(0.9786);">Find</div>
<div style="position:absolute;top:72.11px;font-family:'Liberation Sans',sans-serif;font-size:10.5px;line-height:10.5px;color:#444;font-weight:normal;font-style:normal;white-space:pre;left:1307.00px;transform-origin:left center;transform:scaleX(0.9343);">Replace</div>
<div style="position:absolute;top:91.61px;font-family:'Liberation Sans',sans-serif;font-size:10.5px;line-height:10.5px;color:#444;font-weight:normal;font-style:normal;white-space:pre;left:1307.00px;transform-origin:left center;transform:scaleX(0.9593);">Select</div>
<div style="position:absolute;top:58.69px;font-family:'Liberation Sans',sans-serif;font-size:11px;line-height:11px;color:#333;font-weight:normal;font-style:normal;white-space:pre;left:145.00px;transform-origin:left center;"></div>
<div style="position:absolute;top:738.53px;font-family:'Liberation Sans',sans-serif;font-size:10px;line-height:10px;color:#fff;font-weight:normal;font-style:normal;white-space:pre;left:6.40px;transform-origin:left center;transform:scaleX(0.9019);">PAGE 16 OF 27</div>
<div style="position:absolute;top:738.53px;font-family:'Liberation Sans',sans-serif;font-size:10px;line-height:10px;color:#fff;font-weight:normal;font-style:normal;white-space:pre;left:87.50px;transform-origin:left center;transform:scaleX(0.9391);">3603 WORDS</div>
<div style="position:absolute;top:738.53px;font-family:'Liberation Sans',sans-serif;font-size:10px;line-height:10px;color:#fff;font-weight:normal;font-style:normal;white-space:pre;left:191.50px;transform-origin:left center;transform:scaleX(0.8466);">ENGLISH (UNITED STATES)</div>
<div style="position:absolute;top:738.53px;font-family:'Liberation Sans',sans-serif;font-size:10px;line-height:10px;color:#fff;font-weight:normal;font-style:normal;white-space:pre;left:1373.80px;transform-origin:left center;transform:scaleX(0.8993);">57%</div>
</body></html>
